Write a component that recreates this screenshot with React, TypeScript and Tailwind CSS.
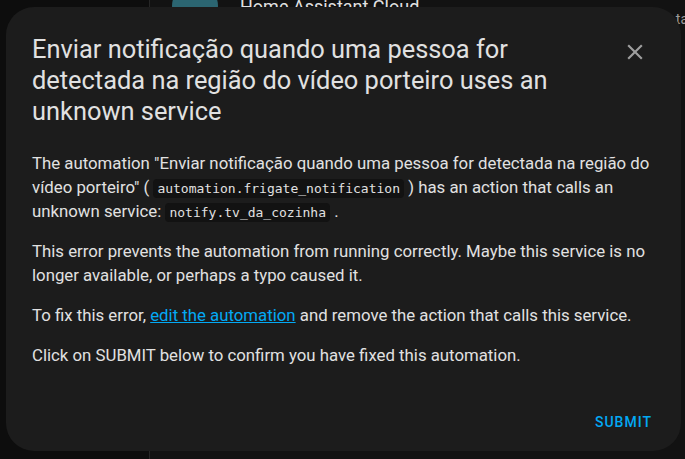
export default function App() {
  return (
    <div className="relative w-[685px] h-[459px] overflow-hidden bg-[#111111] font-['Roboto',sans-serif]">
      {/* page behind the modal */}
      <div className="flex h-full">
        <aside className="w-[150px] h-full bg-[#0d0d0d] border-r border-[#262626]"></aside>
        <div className="flex-1 bg-[#121212]">
          <div className="flex items-center gap-[22px] pl-[22px] -mt-[17px] -mr-[3px]">
            <div className="w-[46px] h-[46px] rounded-full bg-[#2b6571]"></div>
            <span className="text-[18px] text-[#e1e1e1]">Home Assistant Cloud</span>
            <span className="ml-auto self-end text-[14px] leading-[20px] text-[#9b9b9b]">ta</span>
          </div>
        </div>
      </div>

      {/* dialog */}
      <div className="absolute left-[6px] top-[7px] w-[675px] h-[444px] rounded-[28px] bg-[#1c1c1c] flex flex-col">
        <div className="flex items-start pl-[26px] pr-[32px] pt-[27px]">
          <h2 className="flex-1 text-[25.4px] leading-[31px] font-normal text-[#e1e1e1] pr-[50px]">
            Enviar notificação quando uma pessoa for detectada na região do vídeo porteiro uses an unknown service
          </h2>
          <button className="w-[26px] h-[26px] mt-[5px] mr-[1px] flex items-center justify-center text-[#9e9e9e]">
            <svg viewBox="0 0 24 24" width="26" height="26" fill="currentColor">
              <path d="M19,6.41L17.59,5L12,10.59L6.41,5L5,6.41L10.59,12L5,17.59L6.41,19L12,13.41L17.59,19L19,17.59L13.41,12L19,6.41Z" />
            </svg>
          </button>
        </div>

        <div className="pl-[26px] pr-[20px] pt-[24px] text-[16.8px] leading-[24px] text-[#e1e1e1] flex flex-col gap-[16px]">
          <p>
            The automation "Enviar notificação quando uma pessoa for detectada na região do vídeo porteiro" ({' '}
            <code className="font-['DejaVu_Sans_Mono',monospace] text-[13px] leading-none bg-[#121212] rounded-[4px] px-[4px] py-[2px]">automation.frigate_notification</code>{' '}
            ) has an action that calls an unknown service:{' '}
            <code className="font-['DejaVu_Sans_Mono',monospace] text-[13px] leading-none bg-[#121212] rounded-[4px] px-[4px] py-[2px]">notify.tv_da_cozinha</code>{' '}
            .
          </p>
          <p>
            This error prevents the automation from running correctly. Maybe this service is no longer available, or perhaps a typo caused it.
          </p>
          <p>
            To fix this error, <a className="text-[#03a9f4] underline">edit the automation</a> and remove the action that calls this service.
          </p>
          <p>Click on SUBMIT below to confirm you have fixed this automation.</p>
        </div>

        <div className="mt-auto flex justify-end pr-[27px] pb-[12px]">
          <button className="text-[14px] font-medium tracking-[1px] text-[#03a9f4] px-[2px] py-[6px]">SUBMIT</button>
        </div>
      </div>
    </div>
  );
}
